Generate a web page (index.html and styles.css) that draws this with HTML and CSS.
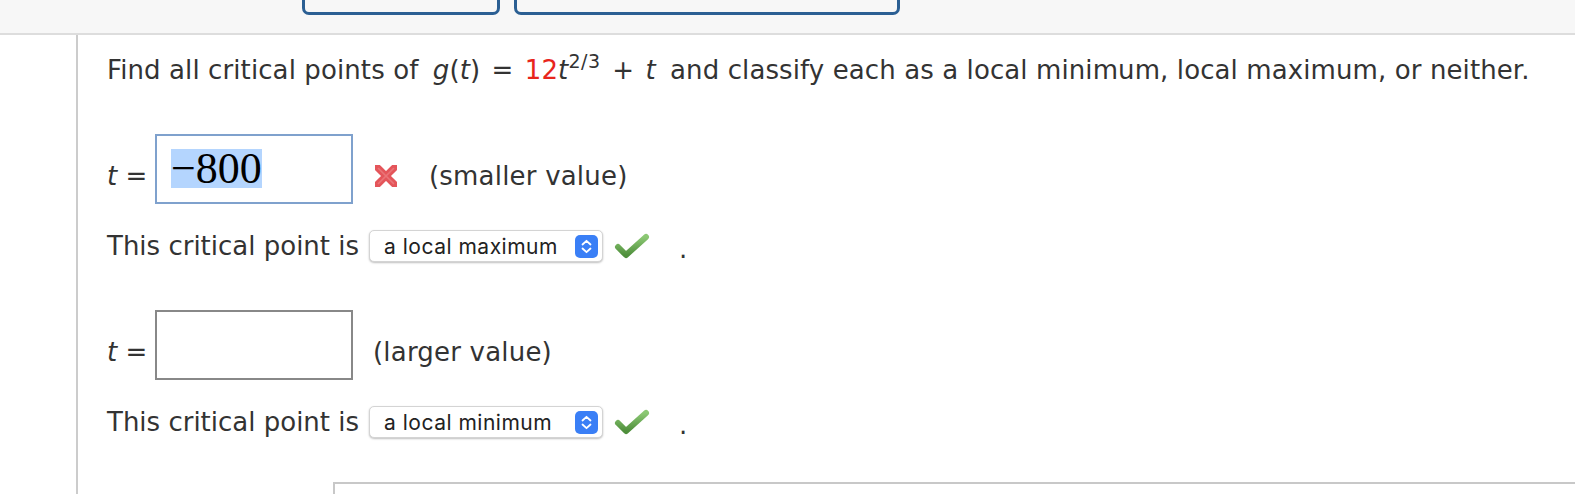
FILE: index.html
```html
<!DOCTYPE html>
<html lang="en">
<head>
    <meta charset="UTF-8">
    <title>Critical Points</title>
    <link rel="stylesheet" href="styles.css">
</head>
<body>
    <div class="topbar">
        <div class="tab-button first"></div>
        <div class="tab-button second"></div>
    </div>

    <div class="question">
        <div class="content">
            <p class="prompt">
                Find all critical points of
                <span class="math"><i>g</i>(<i>t</i>) <span class="op">=</span> <span class="red">12</span><i>t</i><sup>2/3</sup> <span class="op">+</span> <i>t</i></span>
                and classify each as a local minimum, local maximum, or neither.
            </p>

            <div class="answer-row first-row">
                <span class="t-label"><i>t</i> =</span>
                <div class="answer-box focused">
                    <span class="selected">&minus;800</span>
                </div>
                <svg class="mark-x" width="30" height="30" viewBox="0 0 28 28">
                    <defs>
                        <filter id="soft"><feGaussianBlur stdDeviation="0.6"/></filter>
                    </defs>
                    <g filter="url(#soft)" stroke="#e4555a" stroke-width="6.5" stroke-linecap="round">
                        <line x1="6" y1="6" x2="22" y2="22"/>
                        <line x1="22" y1="6" x2="6" y2="22"/>
                    </g>
                    <g stroke="#ef8a8c" stroke-width="1.5" stroke-linecap="round" opacity="0.6">
                        <line x1="7" y1="7" x2="21" y2="21"/>
                        <line x1="21" y1="7" x2="7" y2="21"/>
                    </g>
                </svg>
                <span class="hint smaller">(smaller value)</span>
            </div>

            <div class="select-row">
                <span>This critical point is</span>
                <div class="fake-select">
                    <span>a local maximum</span>
                    <svg class="arrows" width="23" height="23" viewBox="0 0 23 23">
                        <rect width="23" height="23" rx="5" fill="#3a7ff6"/>
                        <path d="M7.5 9.5 L11.5 5.8 L15.5 9.5 M7.5 13.5 L11.5 17.2 L15.5 13.5" fill="none" stroke="#fff" stroke-width="1.8" stroke-linecap="round" stroke-linejoin="round"/>
                    </svg>
                </div>
                <svg class="check" width="38" height="28" viewBox="0 0 38 28">
                    <defs>
                        <linearGradient id="g1" x1="0" y1="0" x2="0" y2="1">
                            <stop offset="0" stop-color="#8cc874"/>
                            <stop offset="1" stop-color="#4f8f3c"/>
                        </linearGradient>
                    </defs>
                    <path d="M5 15 L13 23 L33 5" fill="none" stroke="url(#g1)" stroke-width="6" stroke-linecap="round" stroke-linejoin="round"/>
                </svg>
                <span class="dot">.</span>
            </div>

            <div class="answer-row">
                <span class="t-label"><i>t</i> =</span>
                <div class="answer-box"></div>
                <span class="hint">(larger value)</span>
            </div>

            <div class="select-row">
                <span>This critical point is</span>
                <div class="fake-select">
                    <span>a local minimum</span>
                    <svg class="arrows" width="23" height="23" viewBox="0 0 23 23">
                        <rect width="23" height="23" rx="5" fill="#3a7ff6"/>
                        <path d="M7.5 9.5 L11.5 5.8 L15.5 9.5 M7.5 13.5 L11.5 17.2 L15.5 13.5" fill="none" stroke="#fff" stroke-width="1.8" stroke-linecap="round" stroke-linejoin="round"/>
                    </svg>
                </div>
                <svg class="check" width="38" height="28" viewBox="0 0 38 28">
                    <path d="M5 15 L13 23 L33 5" fill="none" stroke="url(#g1)" stroke-width="6" stroke-linecap="round" stroke-linejoin="round"/>
                </svg>
                <span class="dot">.</span>
            </div>

            <div class="next-part"></div>
        </div>
    </div>
</body>
</html>
```

FILE: styles.css
```css
html, body {
    height: 494px;
    overflow: hidden;
}
body {
    margin: 0;
    background: #fff;
    font-family: "DejaVu Sans", Verdana, sans-serif;
    color: #333;
}
.topbar {
    height: 33px;
    background-color: #f7f7f7;
    border-bottom: 2px solid #ddd;
    display: flex;
    align-items: flex-start;
}
.tab-button {
    height: 30px;
    margin-top: -15px;
    border: 3px solid #2b5f93;
    border-radius: 7px;
    box-sizing: border-box;
}
.tab-button.first {
    margin-left: 302px;
    width: 198px;
}
.tab-button.second {
    margin-left: 14px;
    width: 386px;
}
.question {
    margin-left: 76px;
    border-left: 2px solid #ccc;
    height: 459px;
    overflow: hidden;
}
.content {
    padding-left: 29px;
    padding-top: 20px;
    font-size: 26px;
}
.prompt {
    margin: 0;
    line-height: 30px;
    white-space: nowrap;
    letter-spacing: 0.1px;
}
.math {
    margin: 0 6px 0 6px;
}
.math .op {
    margin: 0 3px;
}
.red {
    color: #e8251c;
}
sup {
    font-size: 19px;
    vertical-align: 11px;
    line-height: 0;
    letter-spacing: 0.6px;
}
.answer-row {
    display: flex;
    align-items: center;
    margin-top: 49px;
}
.answer-row + .select-row {
    margin-top: 26px;
}
.select-row + .answer-row {
    margin-top: 48px;
}
.t-label {
    width: 48px;
    margin-top: 14px;
}
.answer-box {
    width: 198px;
    height: 70px;
    box-sizing: border-box;
    border: 2px solid #888;
    display: flex;
    align-items: center;
    padding-left: 14px;
}
.answer-box.focused {
    border-color: #7fa1cd;
}
.selected {
    font-family: "Liberation Serif", "Times New Roman", serif;
    font-size: 44px;
    color: #000;
    background-color: #b4d5fe;
    line-height: 39px;
    display: inline-block;
    margin-top: -2px;
}
.mark-x {
    margin-left: 18px;
    margin-top: 14px;
}
.hint {
    margin-left: 20px;
    margin-top: 14px;
    letter-spacing: 0.2px;
}
.hint.smaller {
    margin-left: 28px;
}
.select-row {
    display: flex;
    align-items: center;
    height: 32px;
}
.fake-select {
    margin-left: 10px;
    width: 234px;
    height: 32px;
    box-sizing: border-box;
    border: 1px solid #d4d4d4;
    border-radius: 5px;
    box-shadow: 0 1px 2px rgba(0, 0, 0, 0.25);
    background: #fff;
    display: flex;
    align-items: center;
    justify-content: space-between;
    padding: 0 4px 0 14px;
    font-family: Inter, "Liberation Sans", sans-serif;
    font-size: 21px;
    letter-spacing: 0.5px;
    color: #222;
}
.check {
    margin-left: 10px;
}
.dot {
    margin-left: 28px;
    margin-top: 6px;
}
.next-part {
    margin-top: 44px;
    margin-left: 226px;
    height: 40px;
    border-top: 2px solid #c8c8c8;
    border-left: 2px solid #c8c8c8;
}
```
